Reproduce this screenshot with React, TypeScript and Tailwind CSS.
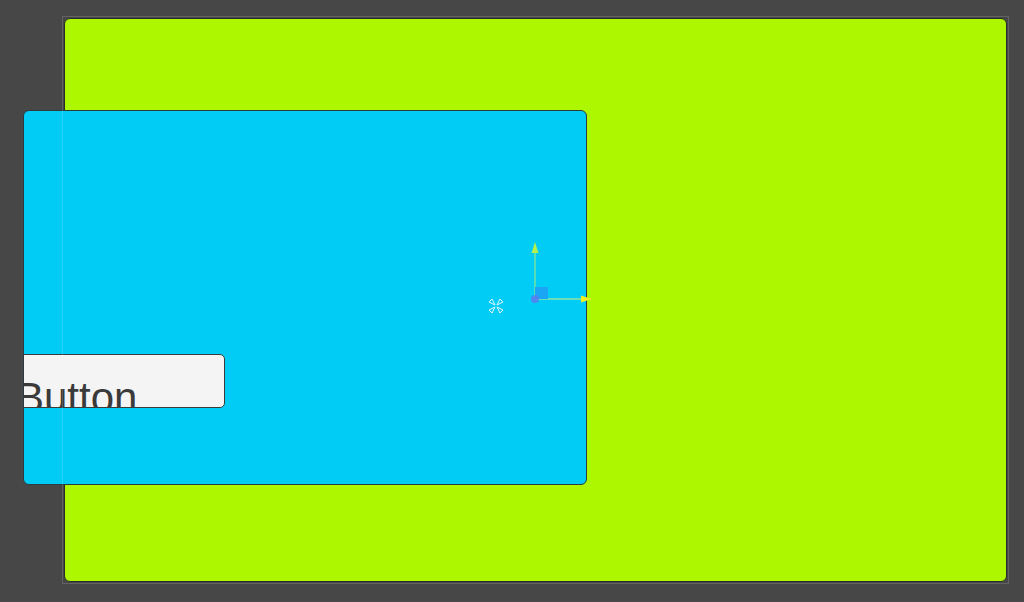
import React from 'react';

// scene view: canvas rect, two panels, a clipped button and the move gizmo
export default function App() {
  return (
    <div className="relative w-[1024px] h-[602px] overflow-hidden bg-[#474747] font-['Liberation_Sans',Arial,sans-serif]">
      {/* green root panel */}
      <div className="absolute left-[64px] top-[18px] w-[943px] h-[564px] rounded-[6px] border border-[#2b2b2b] bg-[#adf700]" />

      {/* cyan child panel */}
      <div className="absolute left-[23px] top-[110px] w-[564px] h-[375px] rounded-[6px] border border-[#2f3a3f] bg-[#00ccf5] overflow-hidden">
        <div className="absolute left-[-24px] top-[243px] w-[225px] h-[54px] rounded-[5px] border border-[#3a3a3a] bg-[#f4f4f4] overflow-hidden">
          <span className="absolute left-[15px] top-[22px] text-[42px] leading-none text-[#3a3a3a] whitespace-nowrap">Button</span>
        </div>
      </div>

      {/* canvas bounds outline, drawn over everything */}
      <div className="pointer-events-none absolute left-[62px] top-[16px] w-[947px] h-[568px] border border-white/15" />

      {/* move gizmo */}
      <svg className="absolute left-[480px] top-[236px]" width="120" height="80" viewBox="0 0 120 80">
        <line x1="55" y1="63" x2="55" y2="14" stroke="#a6f07a" strokeWidth="1" />
        <polygon points="55,6 51.5,17 58.5,17" fill="#b4f050" />
        <line x1="55" y1="63" x2="103" y2="63" stroke="#d8f07a" strokeWidth="1" />
        <polygon points="112,63 101,59.5 101,66.5" fill="#f2f020" />
        <rect x="55" y="51" width="13" height="12" fill="#1aa6f5" />
        <circle cx="55" cy="63" r="4" fill="#5b7af0" opacity="0.85" />
        {/* pivot icon: four crossed blades */}
        <g stroke="#e6f4ff" strokeWidth="1" fill="none" transform="translate(16,70)">
          <path d="M-1,-1 L-7,-4 L-4,-7 Z" />
          <path d="M1,-1 L7,-4 L4,-7 Z" />
          <path d="M-1,1 L-7,4 L-4,7 Z" />
          <path d="M1,1 L7,4 L4,7 Z" />
        </g>
      </svg>
    </div>
  );
}
